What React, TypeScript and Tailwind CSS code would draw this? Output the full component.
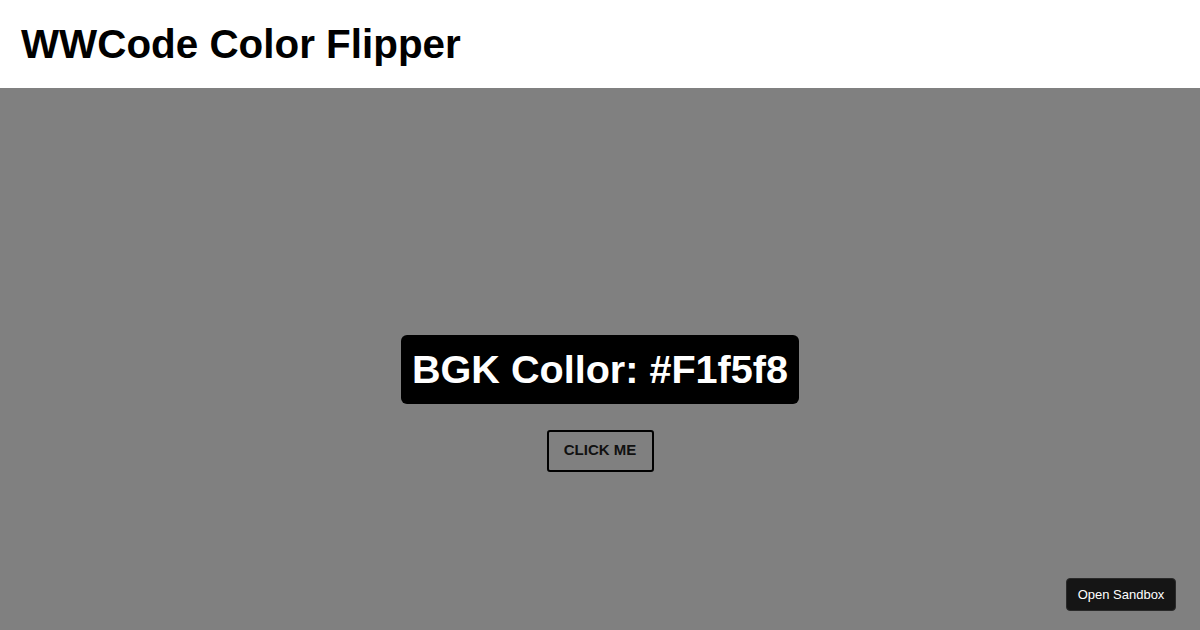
import React, { useState } from 'react';

const colors = ['#F1f5f8', '#f15025', 'rgba(133,122,200)', '#808080'];

export default function App() {
  const [color] = useState('#F1f5f8');
  const [bg, setBg] = useState('#808080');

  const handleClick = () => {
    const next = colors[Math.floor(Math.random() * colors.length)];
    setBg(next);
  };

  return (
    <div className="font-['Liberation_Sans',Arial,sans-serif]">
      <header className="h-[88px] bg-white flex items-center px-[21px]">
        <h1 className="text-[40.4px] font-bold leading-[46px] text-black">WWCode Color Flipper</h1>
      </header>

      <main className="min-h-screen flex flex-col items-center justify-center" style={{ backgroundColor: bg }}>
        <h2 className="bg-black text-white text-[39.6px] font-bold leading-[46px] px-[11px] py-[11.5px] rounded-md">
          BGK Collor: {color}
        </h2>
        <button
          onClick={handleClick}
          className="mt-[26px] w-[107px] h-[42px] border-2 border-black rounded-[3px] text-[15px] font-bold text-[#111] bg-transparent"
        >
          CLICK ME
        </button>
      </main>

      <a className="fixed right-6 bottom-[19px] h-[33px] w-[110px] flex items-center justify-center bg-[#151515] text-white text-[13px] rounded border border-[#2a2a2a]">
        Open Sandbox
      </a>
    </div>
  );
}
